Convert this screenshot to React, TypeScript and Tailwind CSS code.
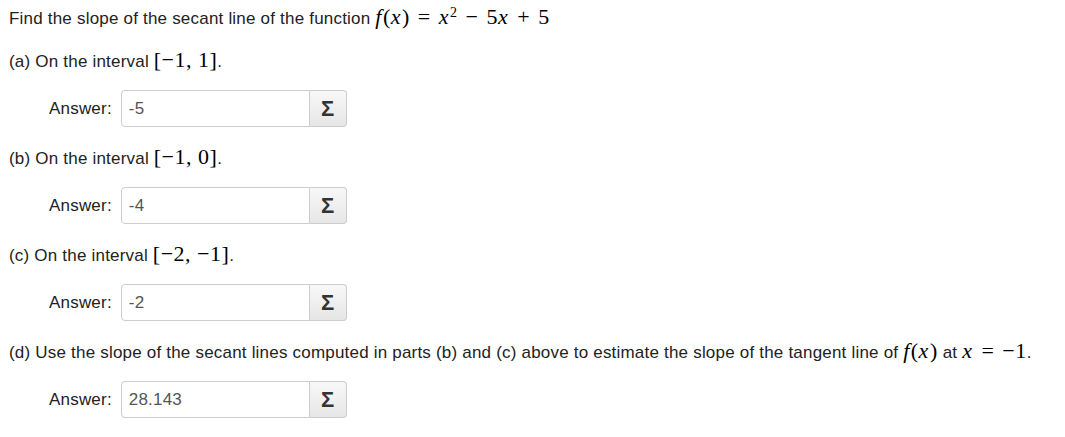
import React from 'react';

const serif = { fontFamily: '"Liberation Serif", "DejaVu Serif", serif' };

function V({ children }: { children: React.ReactNode }) {
  return <i className="pr-[1px]" style={serif}>{children}</i>;
}

function M({ children }: { children: React.ReactNode }) {
  return (
    <span className="text-[22px] leading-none text-black tracking-[0.5px]" style={serif}>
      {children}
    </span>
  );
}

function Op({ children }: { children: React.ReactNode }) {
  return <span className="mx-[8px]">{children}</span>;
}

function AnswerRow({ value }: { value: string }) {
  return (
    <div className="flex items-center pl-[40px] mt-[17px] mb-[19px]">
      <span className="mr-[9px]">Answer:</span>
      <div className="flex h-[37px] w-[226px]">
        <div className="flex flex-1 items-center rounded-l-[4px] border border-[#cccccc] bg-white px-[7px] text-[17px] text-[#555555]">
          {value}
        </div>
        <div className="flex w-[37px] items-center justify-center rounded-r-[4px] border border-l-0 border-[#cccccc] bg-gradient-to-b from-[#f8f8f8] to-[#e6e6e6] text-[22px] font-bold text-[#333333]" style={{ fontFamily: '"Liberation Sans", sans-serif' }}>
          Σ
        </div>
      </div>
    </div>
  );
}

export default function App() {
  return (
    <div className="bg-white px-[9px] pt-[6px] text-[17px] tracking-[0.2px] text-[#222222]" style={{ fontFamily: '"Liberation Sans", Arial, sans-serif' }}>
      <p className="leading-[22px]">
        Find the slope of the secant line of the function{' '}
        <M>
          <V>f</V>(<V>x</V>)<Op>=</Op><V>x</V>
          <sup className="text-[14px]">2</sup>
          <Op>−</Op>5<V>x</V>
          <Op>+</Op>5
        </M>
      </p>

      <p className="mt-[19px] leading-[22px]">
        (a) On the interval <M>[−1, 1]</M>.
      </p>
      <AnswerRow value="-5" />

      <p className="leading-[22px]">
        (b) On the interval <M>[−1, 0]</M>.
      </p>
      <AnswerRow value="-4" />

      <p className="leading-[22px]">
        (c) On the interval <M>[−2, −1]</M>.
      </p>
      <AnswerRow value="-2" />

      <p className="leading-[22px]">
        (d) Use the slope of the secant lines computed in parts (b) and (c) above to estimate the slope of the tangent line of{' '}
        <M>
          <V>f</V>(<V>x</V>)
        </M>{' '}
        at{' '}
        <M>
          <V>x</V>
          <Op>=</Op>−1
        </M>
        .
      </p>
      <AnswerRow value="28.143" />
    </div>
  );
}
